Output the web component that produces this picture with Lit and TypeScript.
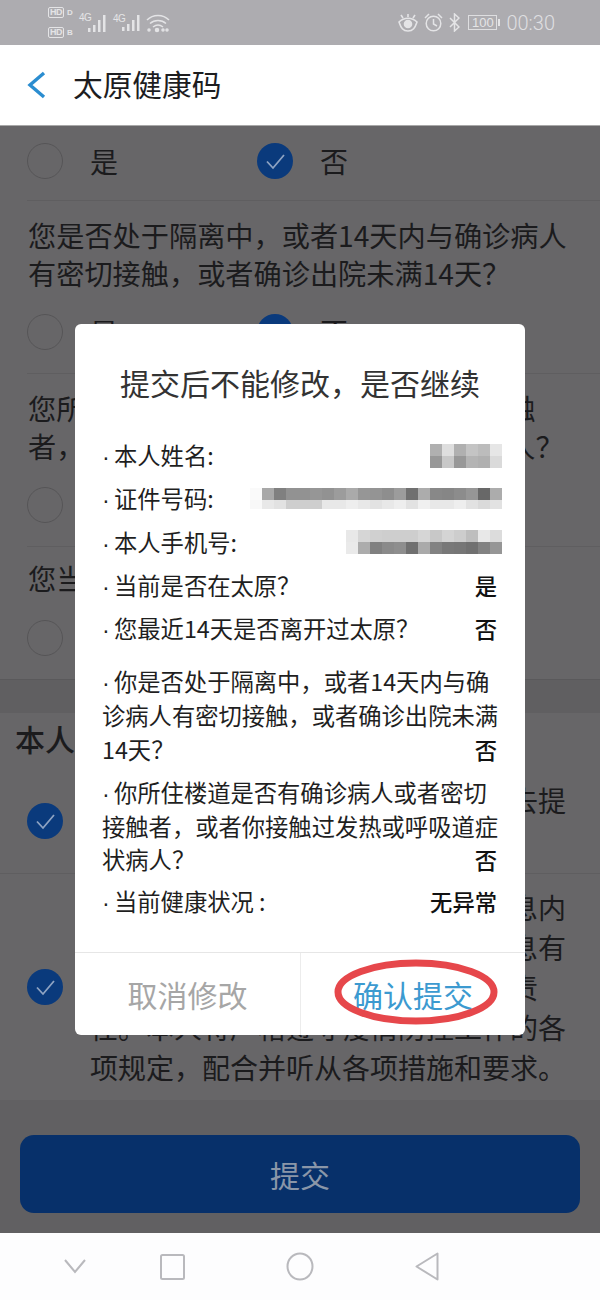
import { LitElement, html, css, svg } from "lit";
import { customElement } from "lit/decorators.js";

const g = (v: number) => `rgb(${v},${v},${v})`;

const BLUR_NAME = [176, 152, 222, 200, 176, 152, 196, 180, 188, 176, 230, 218];
const BLUR_ID = [
  250, 248, 168, 232, 128, 226, 146, 206, 146, 206, 150, 206, 146, 232, 156, 232,
  170, 238, 150, 232, 148, 226, 142, 232, 156, 238, 112, 226, 172, 240, 136, 232,
  134, 232, 140, 238, 150, 226, 104, 218, 172, 226,
];
const BLUR_PHONE = [
  232, 234, 214, 172, 208, 128, 206, 138, 206, 142, 206, 112, 214, 170,
  200, 130, 212, 120, 205, 118, 190, 112, 232, 130, 220, 150,
];

const Q1 = ["您是否处于隔离中，或者14天内与确诊病人", "有密切接触，或者确诊出院未满14天？"];
const Q2 = ["您所住楼道是否有确诊病人或者密切接触", "者，或者你接触过发热或呼吸道症状病人？"];
const P1 = ["本人已知晓相关规定，愿意如实前去提", "交各项信息并承担相应的法律责任。"];
const P2 = [
  "本人承诺所填写的各项个人健康信息内",
  "容均真实准确，如有隐瞒或虚假信息有",
  "关部门有权依法依规追究相应法律责",
  "任。本人将严格遵守疫情防控工作的各",
  "项规定，配合并听从各项措施和要求。",
];

const check = svg`<svg class="tick" viewBox="0 0 36 36"><path d="M10 18.5l6 6.5 11-13" fill="none" stroke="#8ea3c2" stroke-width="1.8"/></svg>`;
const dot = html`<span class="dot">·</span>`;

@customElement("app-root")
export class AppRoot extends LitElement {
  static styles = css`
    :host {
      display: block;
      width: 600px;
      height: 1300px;
      overflow: hidden;
      font-family: "Noto Sans CJK SC", "Liberation Sans", sans-serif;
      color: #1b1b1d;
    }
    .app { display: flex; flex-direction: column; height: 1300px; width: 600px; }

    .status {
      height: 45px; flex: none; background: #adacb0; color: #e4e4e6;
      display: flex; justify-content: space-between; align-items: center;
      padding: 0 45px 0 48px; box-sizing: border-box;
    }
    .st-left, .st-right { display: flex; align-items: center; }
    .hd-col { display: flex; flex-direction: column; gap: 9px; width: 31px; }
    .hd { display: flex; align-items: center; gap: 3px; font: 700 8px/10px "Liberation Sans", sans-serif; }
    .hd b { border: 1px solid #e4e4e6; border-radius: 2px; width: 14px; height: 9px; font: 700 9px/9px "Liberation Sans", sans-serif; text-align: center; letter-spacing: -0.5px; }
    .net { display: flex; align-items: flex-start; width: 34px; }
    .net span { font: 400 10px/10px "Liberation Sans", sans-serif; margin-top: -1px; width: 9px; letter-spacing: -0.5px; }
    .wifi { margin-left: -1px; }
    .st-right { gap: 6px; }
    .batt { display: flex; align-items: center; margin-left: 2px; }
    .batt span { width: 29px; height: 15px; box-sizing: border-box; border: 1px solid #dedee0; font: 400 13px/13px "Liberation Sans", sans-serif; text-align: center; }
    .batt i { width: 2px; height: 7px; background: #e4e4e6; margin-left: 1px; }
    .time { font: 300 20px/1 Roboto, sans-serif; color: #dfdfe1; }

    .header {
      height: 81px; flex: none; background: #fff; display: flex; align-items: center;
      padding-left: 27px; gap: 27px; box-sizing: border-box; border-bottom: 1px solid #a8a8a8;
    }
    .header svg { width: 19px; height: 28px; }
    .header .title { font-size: 29.7px; line-height: 1; color: #1d1d1f; margin-top: -2px; }

    .body { position: relative; flex: 1; min-height: 0; background: #676668; display: flex; flex-direction: column; }
    .radios { height: 74px; display: flex; align-items: center; padding: 0 0 4px 27px; box-sizing: border-box; }
    .radios.tall { height: 82px; padding-bottom: 0; }
    .opt { width: 230px; display: flex; align-items: center; gap: 27px; font-size: 28px; line-height: 36px; }
    .circle { width: 36px; height: 36px; border-radius: 50%; box-sizing: border-box; border: 1.5px solid #565557; flex: none; }
    .circle.on { background: #0a3a7c; border: none; }
    .tick { display: block; width: 36px; height: 36px; }

    .q { border-top: 1px solid #5f5e60; margin-left: 27px; padding-top: 15px; }
    .q-text { margin-left: 1px; font-size: 28.2px; line-height: 37.5px; white-space: nowrap; }
    .q.last { padding-top: 12px; }

    .band { height: 34px; flex: none; background: #605f61; border-top: 1px solid #5a595b; box-sizing: border-box; }
    .sec-title { height: 50px; padding-left: 15px; font-size: 30px; line-height: 50px; font-weight: 500; white-space: nowrap; }
    .promise { display: flex; padding: 17px 0 0 27px; gap: 27px; }
    .promise.first { height: 110px; box-sizing: border-box; }
    .promise.second { border-top: 1px solid #5f5e60; padding-top: 13px; align-items: center; }
    .p-text { font-size: 28px; line-height: 40px; white-space: nowrap; }
    .promise.first .circle { margin-top: 23px; }

    .footer { margin-top: auto; height: 133px; flex: none; background: #616062; padding: 35px 20px 0; box-sizing: border-box; }
    .submit { height: 78px; border-radius: 14px; background: #07306a; color: #8a96a8; font-size: 30px; display: flex; align-items: center; justify-content: center; }

    .nav { height: 67px; flex: none; background: #fdfdfe; }
    .nav svg { display: block; width: 600px; height: 67px; }

    .modal {
      position: absolute; left: 75px; top: 198px; width: 450px; height: 711px;
      background: #fff; border-radius: 6px; display: flex; flex-direction: column; color: #1f1f1f;
    }
    .m-title { height: 110px; box-sizing: border-box; padding-top: 36px; font-size: 30px; line-height: 44px; text-align: center; color: #333; }
    .m-list { flex: 1; padding: 0 28px 0 27px; font-size: 23.3px; }
    .dot { display: inline-block; width: 12px; line-height: 0; font-family: "Liberation Sans", sans-serif; }
    .row { height: 43.3px; line-height: 43.3px; display: flex; justify-content: space-between; align-items: center; white-space: nowrap; }
    .row.health { margin-top: 4px; }
    .row .v { font-weight: 500; color: #111; font-size: 22.3px; }
    .multi { line-height: 34px; white-space: nowrap; margin-top: 14px; }
    .multi.b { line-height: 33.3px; margin-top: 10px; }
    .multi .end { display: flex; justify-content: space-between; }
    .multi .v { font-weight: 500; color: #111; font-size: 22.3px; }
    .blur { display: grid; grid-auto-flow: column; grid-auto-columns: 12px; margin-right: -5px; }
    .blur i { display: block; }
    .blur.name { grid-template-rows: 12px 12px; }
    .blur.id { grid-template-rows: 12px 9px; }
    .blur.phone { grid-template-rows: 12px 12px; }

    .actions { height: 83px; flex: none; display: flex; border-top: 1px solid #e6e6e6; box-sizing: border-box; }
    .act { flex: 1; display: flex; align-items: center; justify-content: center; font-size: 30px; position: relative; }
    .act.cancel { color: #a6a6a6; border-right: 1px solid #ececec; flex: 0 0 226px; box-sizing: border-box; }
    .act.ok { color: #3c9ad0; }
    .ring { position: absolute; left: 30px; top: 3px; width: 170px; height: 70px; overflow: visible; }
  `;

  private blur(kind: string, cells: number[]) {
    return html`<div class="blur ${kind}">${cells.map((c) => html`<i style="background:${g(c)}"></i>`)}</div>`;
  }

  private lines(list: string[]) {
    return list.map((l) => html`<div>${l}</div>`);
  }

  private radios(on: boolean, tall = true) {
    return html`<div class="radios ${tall ? "tall" : ""}">
      <div class="opt"><div class="circle"></div>是</div>
      <div class="opt"><div class="circle ${on ? "on" : ""}">${on ? check : ""}</div>否</div>
    </div>`;
  }

  render() {
    return html`<div class="app">
      <div class="status">
        <div class="st-left">
          <div class="hd-col">
            <div class="hd"><b>HD</b>D</div>
            <div class="hd"><b>HD</b>B</div>
          </div>
          <div class="net"><span>4G</span>
            <svg width="20" height="18" viewBox="0 0 20 18" fill="#e4e4e6"><rect x="0" y="14" width="2.500" height="4"/><rect x="5" y="11" width="2.500" height="7"/><rect x="10" y="6" width="2.500" height="12"/><rect x="15" y="1" width="2.500" height="17"/></svg>
          </div>
          <div class="net"><span>4G</span>
            <svg width="18" height="16" viewBox="0 0 18 16" fill="#e4e4e6"><rect x="0" y="12" width="2.500" height="4"/><rect x="5" y="9" width="2.500" height="7"/><rect x="10" y="5" width="2.500" height="11"/><rect x="15" y="0" width="2.500" height="16"/></svg>
          </div>
          <svg class="wifi" width="24" height="20" viewBox="0 0 24 20" fill="none" stroke="#e4e4e6" stroke-width="1.5"><path d="M1 7c6-6 16-6 22 0"/><path d="M4 10.500c4.500-4 11.500-4 16 0"/><path d="M7 14c3-2.500 7-2.500 10 0"/><circle cx="3" cy="17" r="1" /><circle cx="11" cy="17" r="1.500" fill="#e4e4e6"/><circle cx="17" cy="17" r="1"/><circle cx="21" cy="17" r="1"/></svg>
        </div>
        <div class="st-right">
          <svg width="20" height="18" viewBox="0 0 20 18" fill="none" stroke="#e4e4e6" stroke-width="1.6"><path d="M1 8c5-5 13-5 18 0-2 6-4 9-9 9s-7-3-9-9z"/><circle cx="10" cy="10" r="3.500" fill="#e4e4e6"/><path d="M3 1l2 3M10 0v3M17 1l-2 3"/></svg>
          <svg width="19" height="19" viewBox="0 0 19 19" fill="none" stroke="#e4e4e6" stroke-width="1.5"><circle cx="9.500" cy="10.500" r="7.300"/><path d="M9.500 6v5l3.500 2M1 5l4-4M18 5l-4-4"/></svg>
          <svg width="11" height="19" viewBox="0 0 11 19" fill="none" stroke="#e4e4e6" stroke-width="1.5"><path d="M1 5l9 9-4.500 4V1L10 5l-9 9"/></svg>
          <div class="batt"><span>100</span><i></i></div>
          <div class="time">00:30</div>
        </div>
      </div>

      <div class="header">
        <svg viewBox="0 0 19 28"><path d="M17 2L3 14l14 12" fill="none" stroke="#2b8dd0" stroke-width="3.400"/></svg>
        <div class="title">太原健康码</div>
      </div>

      <div class="body">
        ${this.radios(true, false)}
        <div class="q"><div class="q-text">${this.lines(Q1)}</div></div>
        ${this.radios(true)}
        <div class="q"><div class="q-text">${this.lines(Q2)}</div></div>
        ${this.radios(false)}
        <div class="q last"><div class="q-text">您当前健康状况</div></div>
        ${this.radios(false)}
        <div class="band"></div>
        <div class="sec-title">本人关于健康状况的承诺</div>
        <div class="promise first">
          <div class="circle on">${check}</div>
          <div class="p-text">${this.lines(P1)}</div>
        </div>
        <div class="promise second">
          <div class="circle on">${check}</div>
          <div class="p-text">${this.lines(P2)}</div>
        </div>
        <div class="footer"><div class="submit">提交</div></div>

        <div class="modal">
          <div class="m-title">提交后不能修改，是否继续</div>
          <div class="m-list">
            <div class="row"><span>${dot}本人姓名:</span>${this.blur("name", BLUR_NAME)}</div>
            <div class="row"><span>${dot}证件号码:</span>${this.blur("id", BLUR_ID)}</div>
            <div class="row"><span>${dot}本人手机号:</span>${this.blur("phone", BLUR_PHONE)}</div>
            <div class="row"><span>${dot}当前是否在太原？</span><span class="v">是</span></div>
            <div class="row"><span>${dot}您最近14天是否离开过太原？</span><span class="v">否</span></div>
            <div class="multi">
              <div>${dot}你是否处于隔离中，或者14天内与确</div>
              <div>诊病人有密切接触，或者确诊出院未满</div>
              <div class="end"><span>14天？</span><span class="v">否</span></div>
            </div>
            <div class="multi b">
              <div>${dot}你所住楼道是否有确诊病人或者密切</div>
              <div>接触者，或者你接触过发热或呼吸道症</div>
              <div class="end"><span>状病人？</span><span class="v">否</span></div>
            </div>
            <div class="row health"><span>${dot}当前健康状况 :</span><span class="v">无异常</span></div>
          </div>
          <div class="actions">
            <div class="act cancel">取消修改</div>
            <div class="act ok">确认提交
              <svg class="ring" viewBox="0 0 170 70"><ellipse cx="85" cy="36" rx="78" ry="29" fill="none" stroke="#e6474b" stroke-width="7"/></svg>
            </div>
          </div>
        </div>
      </div>

      <div class="nav">
        <svg viewBox="0 0 600 67" fill="none" stroke="#b9b9bd" stroke-width="2">
          <path d="M65 27l10 12 10-12"/>
          <rect x="161" y="22" width="23" height="24" rx="1.500"/>
          <ellipse cx="300" cy="33.500" rx="12.500" ry="13"/>
          <path d="M437.500 20.500v26l-21-13z" stroke-linejoin="round"/>
        </svg>
      </div>
    </div>`;
  }
}
